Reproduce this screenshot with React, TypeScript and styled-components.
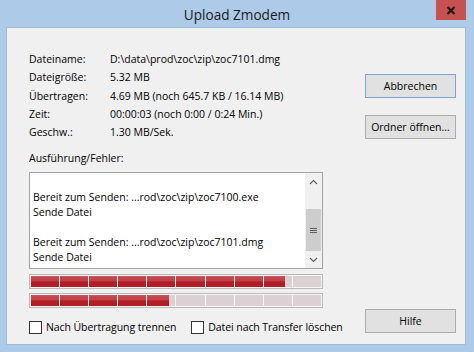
import React from "react";
import styled, { createGlobalStyle } from "styled-components";

const Global = createGlobalStyle`
  html, body { margin: 0; padding: 0; width: 474px; height: 352px; overflow: hidden; }
  body { font-family: "Open Sans", "Noto Sans", sans-serif; color: #000; }
  #root { width: 474px; height: 352px; }
`;

const Frame = styled.div`
  width: 474px;
  height: 352px;
  background: #adcbe8;
  display: flex;
  flex-direction: column;
  box-sizing: border-box;
`;

const TitleBar = styled.div`
  position: relative;
  height: 28px;
  flex: none;
  display: flex;
  align-items: center;
  justify-content: center;
`;

const Title = styled.div`
  font-size: 13.6px;
  color: #1a1a1a;
  padding-top: 1px;
`;

const CloseButton = styled.div`
  position: absolute;
  top: 0;
  right: 8px;
  width: 30px;
  height: 20px;
  background: #c75050;
  display: flex;
  align-items: center;
  justify-content: center;
`;

const Client = styled.div`
  flex: 1;
  margin: 0 9px 8px 7px;
  background: #f0f0f0;
  box-shadow: 0 0 0 1px #9fbddb;
  display: flex;
  padding: 0 9px 0 22px;
  font-size: 10.5px;
`;

const LeftCol = styled.div`
  width: 294px;
  display: flex;
  flex-direction: column;
`;

const InfoGrid = styled.div`
  margin-top: 22px;
  display: grid;
  grid-template-columns: 81px 1fr;
  grid-auto-rows: 18.25px;
  align-items: center;
  white-space: nowrap;
`;

const SectionLabel = styled.div`
  margin-top: 7.75px;
  line-height: 18px;
`;

const LogBox = styled.div`
  margin-top: 5px;
  height: 97px;
  box-sizing: border-box;
  border: 1px solid #a3a3a3;
  background: #fff;
  display: flex;
`;

const LogText = styled.div`
  flex: 1;
  padding: 2px 3px;
  line-height: 15px;
  white-space: pre;
  overflow: hidden;
`;

const ScrollBar = styled.div`
  width: 17px;
  display: flex;
  flex-direction: column;
  background: #f0f0f0;
`;

const ScrollArrow = styled.div`
  height: 17px;
  flex: none;
  display: flex;
  align-items: center;
  justify-content: center;
`;

const ScrollTrack = styled.div`
  flex: 1;
  display: flex;
  flex-direction: column;
  justify-content: flex-end;
`;

const Thumb = styled.div<{ $h: number }>`
  height: ${(p) => p.$h}px;
  margin: 0 1px;
  background: #cdcdcd;
  display: flex;
  align-items: center;
  justify-content: center;
`;

const Bar = styled.div<{ $mt: number }>`
  margin-top: ${(p) => p.$mt}px;
  height: 15px;
  box-sizing: border-box;
  border: 1px solid #b9b9b9;
  background: #f6f6f6;
  padding: 1px;
  display: flex;
  gap: 1px;
`;

const Segment = styled.div`
  flex: 1;
  background: #dbd1d2;
  display: flex;
`;

const SegmentFill = styled.div`
  height: 100%;
  background: linear-gradient(
    to bottom,
    #cc5a60 0,
    #c2434a 18%,
    #c2434a 45%,
    #b21f27 52%,
    #b01d25 100%
  );
`;

const CheckRow = styled.div`
  margin-top: 10px;
  height: 18px;
  display: flex;
  align-items: center;
  gap: 15px;
  white-space: nowrap;
  letter-spacing: -0.08px;
`;

const CheckItem = styled.label`
  display: flex;
  align-items: center;
  gap: 4px;
`;

const CheckBox = styled.span`
  width: 13px;
  height: 13px;
  box-sizing: border-box;
  border: 1px solid #333;
  background: #fff;
`;

const RightCol = styled.div`
  width: 91px;
  margin-left: auto;
  display: flex;
  flex-direction: column;
  padding: 46px 0 11px;
`;

const Button = styled.div<{ $default?: boolean; $mt?: string }>`
  height: 24px;
  box-sizing: border-box;
  margin-top: ${(p) => p.$mt || "0"};
  border: 1px solid ${(p) => (p.$default ? "#78a6d3" : "#adadad")};
  background: #e1e1e1;
  display: flex;
  align-items: center;
  justify-content: center;
  white-space: nowrap;
`;

const ProgressBar: React.FC<{ value: number; mt: number }> = ({ value, mt }) => (
  <Bar $mt={mt}>
    {Array.from({ length: 10 }, (_, i) => {
      const f = Math.max(0, Math.min(1, value * 10 - i));
      return (
        <Segment key={i}>
          <SegmentFill style={{ width: `${f * 100}%` }} />
        </Segment>
      );
    })}
  </Bar>
);

const Chevron: React.FC<{ up?: boolean }> = ({ up }) => (
  <svg width="9" height="6" viewBox="0 0 9 6">
    <path
      d={up ? "M1 5 L4.5 1.5 L8 5" : "M1 1 L4.5 4.5 L8 1"}
      fill="none"
      stroke="#606060"
      strokeWidth="1.1"
    />
  </svg>
);

const rows: [string, string][] = [
  ["Dateiname:", "D:\\data\\prod\\zoc\\zip\\zoc7101.dmg"],
  ["Dateigröße:", "5.32 MB"],
  ["Übertragen:", "4.69 MB (noch 645.7 KB / 16.14 MB)"],
  ["Zeit:", "00:00:03 (noch 0:00 / 0:24 Min.)"],
  ["Geschw.:", "1.30 MB/Sek."],
];

const log = [
  "",
  "Bereit zum Senden: ...rod\\zoc\\zip\\zoc7100.exe",
  "Sende Datei",
  "",
  "Bereit zum Senden: ...rod\\zoc\\zip\\zoc7101.dmg",
  "Sende Datei",
].join("\n");

export default function App() {
  return (
    <>
      <Global />
      <Frame>
        <TitleBar>
          <Title>Upload Zmodem</Title>
          <CloseButton>
            <svg width="10" height="9" viewBox="0 0 10 9">
              <path d="M1.5 1 L8.5 8 M8.5 1 L1.5 8" stroke="#1a1a1a" strokeWidth="2.2" />
            </svg>
          </CloseButton>
        </TitleBar>
        <Client>
          <LeftCol>
            <InfoGrid>
              {rows.map(([k, v]) => (
                <React.Fragment key={k}>
                  <span>{k}</span>
                  <span>{v}</span>
                </React.Fragment>
              ))}
            </InfoGrid>
            <SectionLabel>Ausführung/Fehler:</SectionLabel>
            <LogBox>
              <LogText>{log}</LogText>
              <ScrollBar>
                <ScrollArrow>
                  <Chevron up />
                </ScrollArrow>
                <ScrollTrack>
                  <Thumb $h={42}>
                    <svg width="7" height="7" viewBox="0 0 7 7">
                      <path d="M0 1.5 H7 M0 3.5 H7 M0 5.5 H7" stroke="#606060" strokeWidth="1" />
                    </svg>
                  </Thumb>
                </ScrollTrack>
                <ScrollArrow>
                  <Chevron />
                </ScrollArrow>
              </ScrollBar>
            </LogBox>
            <ProgressBar value={0.876} mt={5} />
            <ProgressBar value={0.476} mt={4} />
            <CheckRow>
              <CheckItem>
                <CheckBox />
                Nach Übertragung trennen
              </CheckItem>
              <CheckItem>
                <CheckBox />
                Datei nach Transfer löschen
              </CheckItem>
            </CheckRow>
          </LeftCol>
          <RightCol>
            <Button $default>Abbrechen</Button>
            <Button $mt="17px">Ordner öffnen...</Button>
            <Button $mt="auto">Hilfe</Button>
          </RightCol>
        </Client>
      </Frame>
    </>
  );
}
